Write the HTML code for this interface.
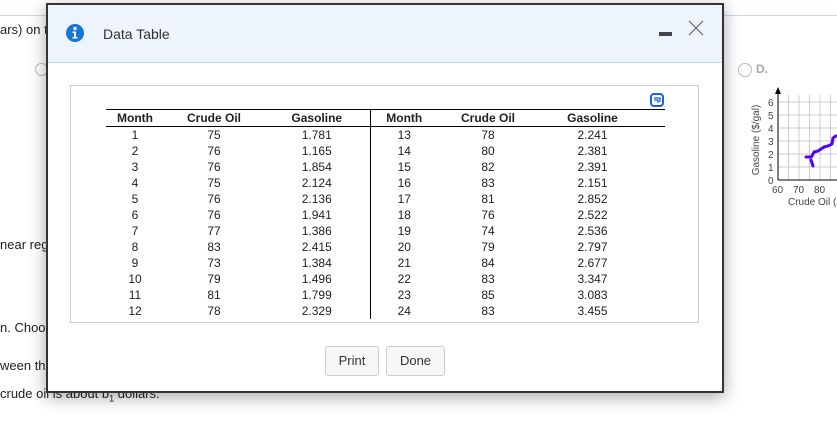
<!DOCTYPE html>
<html><head><style>
body{margin:0;width:837px;height:437px;position:relative;overflow:hidden;background:#fff;font-family:"Liberation Sans",Arial,sans-serif;color:#222}
.a{position:absolute}
.bg{font-size:13px;color:#222}
#dlg{position:absolute;left:46px;top:3px;width:674px;height:386px;border:2px solid #333;background:#fff;box-shadow:0 4px 16px rgba(0,0,0,.35)}
#hd{position:absolute;left:0;top:0;width:674px;height:57px;background:#eef4fc;border-bottom:1px solid #bcdcf2}
#box{position:absolute;left:22px;top:80px;width:627px;height:236px;border:1px solid #ccc}
table{position:absolute;left:58px;top:104px;border-collapse:collapse;font-size:12px;width:559px}
td,th{text-align:center;padding:0;height:16px;line-height:16px}
th{font-weight:bold;height:16px;line-height:16px;border-top:1.5px solid #000;border-bottom:1.5px solid #000}
.dv{border-right:1px solid #000}
.btn{position:absolute;top:341px;height:28px;border:1px solid #ccc;border-radius:3px;background:#f7f7f7;font-size:13px;line-height:28px;text-align:center;color:#333}
</style></head><body>
<div class="a" style="left:0;top:15px;width:837px;height:1px;background:#d0d8e4"></div>
<div class="a bg" style="left:0;top:22px">ars) on t</div>
<div class="a" style="left:35px;top:63px;width:11px;height:11px;border:1px solid #bbb;border-radius:50%"></div>
<div class="a bg" style="left:0;top:237px">near regr</div>
<div class="a bg" style="left:0;top:320px">n. Choos</div>
<div class="a bg" style="left:0;top:358px">ween th</div>
<div class="a bg" style="left:0;top:386px">crude oil is about b<sub style="font-size:9px">1</sub> dollars.</div>
<div class="a" style="left:738px;top:63px;width:12px;height:12px;border:1px solid #bbb;border-radius:50%"></div>
<div class="a" style="left:756px;top:62px;font-size:12px;font-weight:bold;color:#aaa">D.</div>
<svg class="a" style="left:745px;top:85px" width="92" height="125">
<text x="0" y="0" font-size="10" fill="#444" text-anchor="middle" transform="translate(14,55) rotate(-90)" font-family="Liberation Sans">Gasoline ($/gal)</text>
<g stroke="#ccc" stroke-width="1">
<line x1="33" y1="17" x2="92" y2="17"/><line x1="33" y1="30" x2="92" y2="30"/><line x1="33" y1="43" x2="92" y2="43"/><line x1="33" y1="56" x2="92" y2="56"/><line x1="33" y1="69" x2="92" y2="69"/><line x1="33" y1="82" x2="92" y2="82"/>
<line x1="43.5" y1="10" x2="43.5" y2="95"/><line x1="54" y1="10" x2="54" y2="95"/><line x1="64.5" y1="10" x2="64.5" y2="95"/><line x1="75" y1="10" x2="75" y2="95"/><line x1="85.5" y1="10" x2="85.5" y2="95"/>
</g>
<line x1="33" y1="5" x2="33" y2="95" stroke="#000"/><line x1="33" y1="95" x2="92" y2="95" stroke="#000"/>
<path d="M30 9 L33 2 L36 9Z" fill="#000"/>
<g font-size="10" fill="#444" font-family="Liberation Sans"><text x="23" y="21">6</text><text x="23" y="34">5</text><text x="23" y="47">4</text><text x="23" y="60">3</text><text x="23" y="73">2</text><text x="23" y="86">1</text><text x="23" y="99">0</text>
<text x="27" y="108">60</text><text x="48" y="108">70</text><text x="69" y="108">80</text><text x="43" y="120">Crude Oil (</text></g>
<g stroke="#5500ee" stroke-width="3" fill="none" stroke-linecap="round"><path d="M61 72 L66 72 M66 75 L68 81 M67 71 L69 67 L73 66 L76 64 L79 62 L83 61 L87 59 L88 53 L91 51"/></g>
</svg>
<div id="dlg">
<div id="hd">
<svg class="a" style="left:18px;top:19px" width="18" height="18"><circle cx="9" cy="9" r="9" fill="#1a73d8"/><circle cx="9" cy="4.5" r="1.7" fill="#fff"/><path d="M6.5 7.5h3.5v5.5h1.5v1.5h-5v-1.5h1.5v-4h-1.5z" fill="#fff"/></svg>
<div class="a" style="left:55px;top:21px;font-size:14px;color:#333">Data Table</div>
<div class="a" style="left:611px;top:27px;width:13px;height:4px;background:#444"></div>
<svg class="a" style="left:640px;top:15px" width="16" height="16"><path d="M1 1L15 15M15 1L1 15" stroke="#666" stroke-width="1.2"/></svg>
</div>
<div id="box"></div>
<svg class="a" style="left:602px;top:88px" width="14" height="14"><rect x="1" y="1" width="12" height="12" rx="3" fill="#fff" stroke="#1a5fe0" stroke-width="2"/><path d="M4 5h6v4M4 7h4v3" stroke="#1a5fe0" stroke-width="1.3" fill="none"/></svg>
<table>
<colgroup><col style="width:58px"><col style="width:100px"><col style="width:106px"><col style="width:68px"><col style="width:100px"><col style="width:109px"><col style="width:18px"></colgroup>
<tr><th>Month</th><th>Crude Oil</th><th class="dv">Gasoline</th><th>Month</th><th>Crude Oil</th><th>Gasoline</th><th></th></tr>
<tr><td>1</td><td>75</td><td class="dv">1.781</td><td>13</td><td>78</td><td>2.241</td><td></td></tr>
<tr><td>2</td><td>76</td><td class="dv">1.165</td><td>14</td><td>80</td><td>2.381</td><td></td></tr>
<tr><td>3</td><td>76</td><td class="dv">1.854</td><td>15</td><td>82</td><td>2.391</td><td></td></tr>
<tr><td>4</td><td>75</td><td class="dv">2.124</td><td>16</td><td>83</td><td>2.151</td><td></td></tr>
<tr><td>5</td><td>76</td><td class="dv">2.136</td><td>17</td><td>81</td><td>2.852</td><td></td></tr>
<tr><td>6</td><td>76</td><td class="dv">1.941</td><td>18</td><td>76</td><td>2.522</td><td></td></tr>
<tr><td>7</td><td>77</td><td class="dv">1.386</td><td>19</td><td>74</td><td>2.536</td><td></td></tr>
<tr><td>8</td><td>83</td><td class="dv">2.415</td><td>20</td><td>79</td><td>2.797</td><td></td></tr>
<tr><td>9</td><td>73</td><td class="dv">1.384</td><td>21</td><td>84</td><td>2.677</td><td></td></tr>
<tr><td>10</td><td>79</td><td class="dv">1.496</td><td>22</td><td>83</td><td>3.347</td><td></td></tr>
<tr><td>11</td><td>81</td><td class="dv">1.799</td><td>23</td><td>85</td><td>3.083</td><td></td></tr>
<tr><td>12</td><td>78</td><td class="dv">2.329</td><td>24</td><td>83</td><td>3.455</td><td></td></tr>
</table>
<div class="btn" style="left:277px;width:52px">Print</div>
<div class="btn" style="left:338px;width:57px">Done</div>
</div>
</body></html>
